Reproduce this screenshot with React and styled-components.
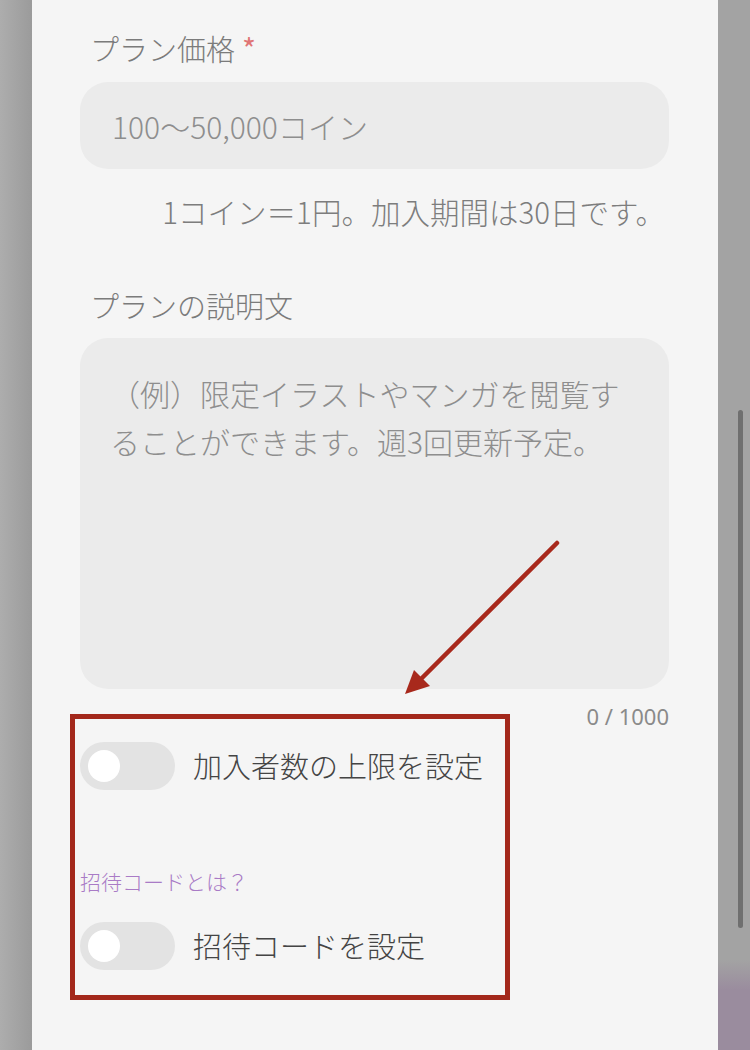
import React from "react";
import styled, { createGlobalStyle } from "styled-components";

const GlobalStyle = createGlobalStyle`
  html, body {
    margin: 0;
    padding: 0;
    background: #a3a3a3;
  }
  body {
    font-family: "Noto Sans CJK JP", "Noto Sans", sans-serif;
    font-weight: 300;
  }
`;

const Page = styled.div`
  display: flex;
  width: 750px;
  height: 1050px;
  overflow: hidden;
`;

const Shade = styled.div`
  flex: 0 0 32px;
  background: linear-gradient(to right, #adadad, #9b9b9b);
`;

const Gutter = styled.div`
  position: relative;
  flex: 0 0 32px;
  background: linear-gradient(to bottom, #a3a3a3 0, #a3a3a3 960px, #9a8c9e 990px, #9a8c9e 100%);
`;

const ScrollThumb = styled.div`
  position: absolute;
  left: 20px;
  top: 410px;
  width: 5px;
  height: 518px;
  border-radius: 3px;
  background: #6f6f6f;
`;

const Panel = styled.div`
  position: relative;
  flex: 1;
  background: #f5f5f5;
  padding: 28px 49px 0 48px;
  box-sizing: border-box;
`;

const Label = styled.div`
  font-size: 29px;
  line-height: 40px;
  color: #7b7b7b;
  margin-top: ${(p) => p.$top || 0}px;
  padding-left: 10px;
`;

const Required = styled.span`
  color: #e07575;
  margin-left: 7px;
  font-size: 30px;
  font-weight: 400;
`;

const TextInput = styled.input`
  display: block;
  width: 100%;
  height: 87px;
  margin-top: 14px;
  border: none;
  outline: none;
  border-radius: 28px;
  background: #ebebeb;
  padding: 0 0 0 32px;
  box-sizing: border-box;
  font-family: inherit;
  font-weight: 300;
  font-size: 30px;
  color: #555;
  &::placeholder {
    color: #8e8e8e;
  }
`;

const Hint = styled.div`
  margin-top: 22px;
  padding-right: 4px;
  text-align: right;
  font-size: 29.5px;
  line-height: 40px;
  color: #7d7d7d;
`;

const TextArea = styled.textarea`
  display: block;
  width: 100%;
  height: 351px;
  margin-top: 13px;
  border: none;
  outline: none;
  resize: none;
  border-radius: 28px;
  background: #ebebeb;
  padding: 31px 30px;
  box-sizing: border-box;
  font-family: inherit;
  font-weight: 300;
  font-size: 30px;
  line-height: 48px;
  color: #555;
  &::placeholder {
    color: #8e8e8e;
  }
`;

const Counter = styled.div`
  margin-top: 13px;
  text-align: right;
  font-family: "Noto Sans", "Open Sans", sans-serif;
  font-weight: 400;
  font-size: 22px;
  line-height: 28px;
  color: #8a8a8a;
`;

const ToggleSection = styled.div`
  position: relative;
  margin-top: 12px;
  display: flex;
  flex-direction: column;
  align-items: flex-start;
`;

const Highlight = styled.div`
  position: absolute;
  left: -10px;
  top: -28px;
  width: 440px;
  height: 286px;
  border: 5px solid #a3281b;
  box-sizing: border-box;
  pointer-events: none;
`;

const ToggleRow = styled.label`
  display: flex;
  align-items: center;
  gap: 18px;
  margin-top: ${(p) => p.$top || 0}px;
`;

const Switch = styled.span`
  position: relative;
  display: block;
  width: 95px;
  height: 48px;
  border-radius: 24px;
  background: #e3e3e3;
  &::after {
    content: "";
    position: absolute;
    left: 8px;
    top: 8px;
    width: 32px;
    height: 32px;
    border-radius: 50%;
    background: #ffffff;
  }
`;

const ToggleText = styled.span`
  font-size: 29px;
  line-height: 40px;
  margin-top: -3px;
  color: #444;
`;

const HelpLink = styled.a`
  margin-top: 76px;
  font-size: 21px;
  line-height: 30px;
  color: #a97bc6;
  text-decoration: none;
`;

const Arrow = styled.svg`
  position: absolute;
  left: 370px;
  top: 538px;
  width: 160px;
  height: 162px;
  overflow: visible;
  pointer-events: none;
`;

export default function App() {
  return (
    <>
      <GlobalStyle />
      <Page>
        <Shade />
        <Panel>
          <Label>
            プラン価格<Required>*</Required>
          </Label>
          <TextInput type="text" placeholder="100〜50,000コイン" />
          <Hint>1コイン＝1円。加入期間は30日です。</Hint>

          <Label $top={54}>プランの説明文</Label>
          <TextArea placeholder="（例）限定イラストやマンガを閲覧することができます。週3回更新予定。" />
          <Counter>0 / 1000</Counter>

          <ToggleSection>
            <Highlight />
            <ToggleRow>
              <Switch />
              <ToggleText>加入者数の上限を設定</ToggleText>
            </ToggleRow>
            <HelpLink href="#">招待コードとは？</HelpLink>
            <ToggleRow $top={26}>
              <Switch />
              <ToggleText>招待コードを設定</ToggleText>
            </ToggleRow>
          </ToggleSection>

          <Arrow viewBox="0 0 160 162">
            <line x1="155" y1="5" x2="20" y2="140" stroke="#a8291c" strokeWidth="4.5" strokeLinecap="round" />
            <polygon points="3,156 28,148 12,132" fill="#a8291c" />
          </Arrow>
        </Panel>
        <Gutter>
          <ScrollThumb />
        </Gutter>
      </Page>
    </>
  );
}
